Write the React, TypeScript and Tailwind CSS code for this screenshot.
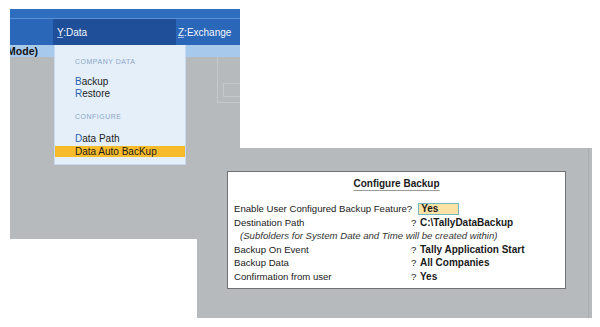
import React from 'react';

const GREY = 'bg-[#b6babd]';

function MenuItem({ first, rest }: { first: string; rest: string }) {
  return (
    <div className="h-[12px] leading-[12px]">
      <span className="text-[#2a5fb0]">{first}</span>
      {rest}
    </div>
  );
}

function TallyMenu() {
  return (
    <div className={`absolute left-[10px] top-[9px] w-[230px] h-[230px] overflow-hidden ${GREY}`}>
      {/* title + menu bar */}
      <div className="h-[9px] bg-[#2f6dbf]" />
      <div className="h-[1px] bg-[#5b90d6]" />
      <div className="h-[26px] bg-[#2b67b9] flex text-[10px] text-[#f2f6fc] font-['Liberation_Sans',sans-serif]">
        <div className="w-[43px]" />
        <div className="w-[123px] bg-[#1f4f98] pl-[4px] flex items-center">
          <span><span className="underline decoration-[#9fbde6]">Y</span>:Data</span>
        </div>
        <div className="pl-[2px] flex items-center whitespace-nowrap">
          <span><span className="underline decoration-[#9fbde6]">Z</span>:Exchange</span>
        </div>
      </div>
      {/* info strip */}
      <div className="h-[12px] bg-[#a6c9ec] flex">
        <div className="w-[28px] overflow-hidden flex justify-end items-center whitespace-nowrap text-[10.5px] font-bold leading-[12px] text-[#111] font-['Liberation_Sans',sans-serif]">
          Mode)
        </div>
      </div>

      {/* faint panel outlines behind */}
      <div className="absolute left-[207px] top-[48px] w-[30px] h-[46px] border-l border-b border-[#c6c9cc]" />
      <div className="absolute left-[213px] top-[74px] w-[24px] h-[14px] border-l border-t border-b border-[#c6c9cc]" />

      {/* dropdown */}
      <div className="absolute left-[44px] top-[36px] w-[132px] h-[120px] bg-[#e4effa] border-x border-b border-[#c5dbf1] font-['Liberation_Sans',sans-serif] text-[10px] text-[#1c1c1c]">
        <div className="pl-[20px] pt-[13px] text-[7px] tracking-[0.5px] text-[#8ea6c4] leading-[8px]">COMPANY DATA</div>
        <div className="pl-[20px] mt-[10px]">
          <MenuItem first="B" rest="ackup" />
          <MenuItem first="R" rest="estore" />
        </div>
        <div className="pl-[20px] mt-[13px] text-[7px] tracking-[0.5px] text-[#8ea6c4] leading-[8px]">CONFIGURE</div>
        <div className="pl-[20px] mt-[12px]">
          <MenuItem first="D" rest="ata Path" />
        </div>
        <div className="mt-[1px] h-[11px] leading-[11px] bg-[#f8bb2c] pl-[20px]">Data Auto BacKup</div>
      </div>
    </div>
  );
}

function Row({ label, value }: { label: string; value: string }) {
  return (
    <div className="flex h-[13.5px] leading-[13.5px] items-center">
      <div className="w-[177px] text-[9.6px] whitespace-nowrap">{label}</div>
      <div className="w-[9px] text-[9.6px]">?</div>
      <div className="text-[10px] font-bold whitespace-nowrap">{value}</div>
    </div>
  );
}

function BackupConfig() {
  return (
    <div className={`absolute left-[197px] top-[148px] w-[395px] h-[170px] flex ${GREY}`}>
      <div className="w-[391px] pl-[30px] pt-[23px]">
        <div className="w-[339px] h-[118px] bg-white border border-[#707070] pl-[6px] pt-[6px] text-[#1a1a1a] font-['Liberation_Sans',sans-serif]">
          <div className="text-center text-[10px] font-bold leading-[12px] pr-[6px]">
            <span className="underline decoration-[#9a9a9a] underline-offset-[3px]">Configure Backup</span>
          </div>
          <div className="mt-[12px]">
            <div className="flex h-[13.5px] items-center">
              <div className="text-[9.6px] whitespace-nowrap leading-[13.5px]">Enable User Configured Backup Feature?</div>
              <div className="ml-[6px] w-[41px] h-[12px] bg-[#fde2a6] border border-[#70b9c2] text-[10px] font-bold leading-[10px] pl-[2px]">
                Yes
              </div>
            </div>
            <Row label="Destination Path" value="C:\TallyDataBackup" />
            <div className="h-[13.5px] leading-[13.5px] pl-[6px] text-[9.6px] italic text-[#333] whitespace-nowrap">
              (Subfolders for System Date and Time will be created within)
            </div>
            <Row label="Backup On Event" value="Tally Application Start" />
            <Row label="Backup Data" value="All Companies" />
            <Row label="Confirmation from user" value="Yes" />
          </div>
        </div>
      </div>
      <div className="w-[1px] bg-[#a9adb0]" />
    </div>
  );
}

export default function App() {
  return (
    <div className="relative w-[600px] h-[327px] bg-white overflow-hidden">
      <TallyMenu />
      <BackupConfig />
    </div>
  );
}
